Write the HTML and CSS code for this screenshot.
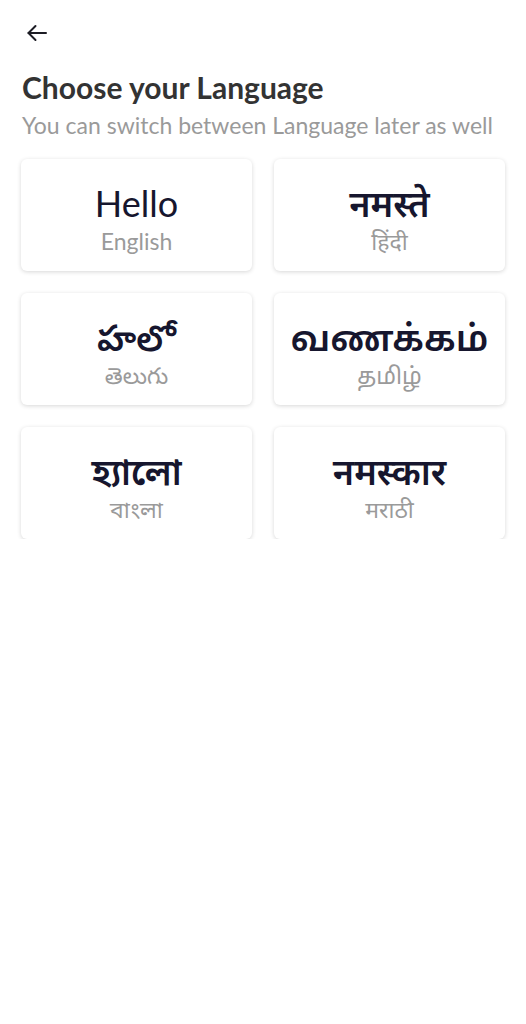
FILE: index.html
```html
<!DOCTYPE html>
<html lang="en">
<head>
    <meta charset="UTF-8">
    <title>Choose your Language</title>
    <link rel="stylesheet" href="styles.css">
</head>
<body>
    <div class="page">
        <div class="topbar">
            <button class="back" aria-label="Back">
                <svg width="24" height="24" viewBox="0 0 24 24" fill="none" stroke="#1c1c24" stroke-width="2" stroke-linecap="round" stroke-linejoin="round">
                    <path d="M21 12H3.5"/>
                    <path d="M10.5 5L3.5 12l7 7"/>
                </svg>
            </button>
        </div>

        <h1 class="title">Choose your Language</h1>
        <p class="subtitle">You can switch between Language later as well</p>

        <div class="languages">
            <div class="lang-card">
                <div class="greeting">Hello</div>
                <div class="lang-name">English</div>
            </div>
            <div class="lang-card">
                <div class="greeting indic">नमस्ते</div>
                <div class="lang-name">हिंदी</div>
            </div>
            <div class="lang-card">
                <div class="greeting indic">హలో</div>
                <div class="lang-name">తెలుగు</div>
            </div>
            <div class="lang-card">
                <div class="greeting indic">வணக்கம்</div>
                <div class="lang-name">தமிழ்</div>
            </div>
            <div class="lang-card">
                <div class="greeting indic">হ্যালো</div>
                <div class="lang-name">বাংলা</div>
            </div>
            <div class="lang-card">
                <div class="greeting indic">नमस्कार</div>
                <div class="lang-name">मराठी</div>
            </div>
        </div>
    </div>
</body>
</html>
```

FILE: styles.css
```css
body {
    margin: 0;
    background-color: #fff;
    font-family: 'Lato', 'Noto Sans', 'Noto Sans Devanagari', 'Noto Sans Telugu', 'Noto Sans Tamil', 'Noto Sans Bengali', sans-serif;
    color: #333;
}
.page {
    padding: 0 21px;
}
.topbar {
    height: 66px;
    display: flex;
    align-items: center;
}
.back {
    background: none;
    border: none;
    padding: 0;
    margin-left: 4px;
    display: flex;
}
.title {
    margin: 3px 0 0 1px;
    font-size: 30px;
    font-weight: 700;
    color: #333;
    line-height: 36px;
}
.subtitle {
    margin: 6px 0 0 1px;
    font-size: 23px;
    color: #9a9a9a;
    line-height: 28px;
}
.languages {
    display: grid;
    grid-template-columns: 1fr 1fr;
    gap: 22px;
    margin-top: 20px;
}
.lang-card {
    height: 112px;
    box-sizing: border-box;
    padding-top: 22px;
    border-radius: 6px;
    background: #fff;
    box-shadow: 0 1px 4px rgba(0, 0, 0, 0.16);
    display: flex;
    flex-direction: column;
    align-items: center;
}
.greeting {
    font-size: 36px;
    line-height: 44px;
    color: #16162e;
}
.greeting.indic {
    font-weight: 600;
}
.lang-name {
    margin-top: 2px;
    font-size: 23px;
    line-height: 28px;
    color: #9a9a9a;
}
```
